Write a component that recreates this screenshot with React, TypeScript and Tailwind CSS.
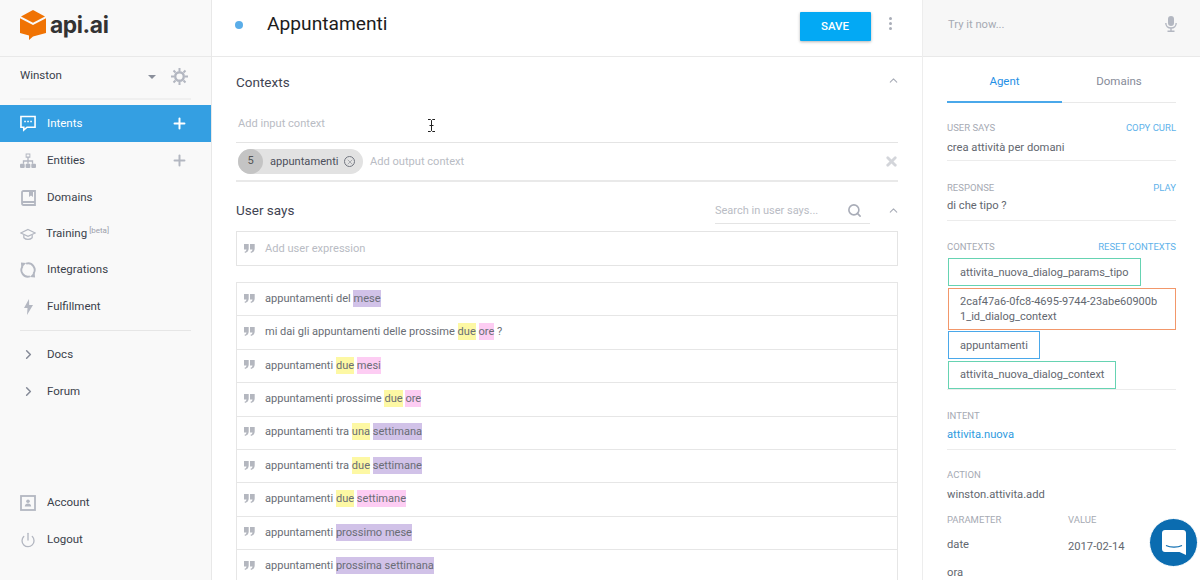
import React from 'react';
import { ChevronRight, ChevronUp, Search, Plus, Power, X } from 'lucide-react';

const Quote = () => (
  <svg width="11" height="9" viewBox="0 0 11 9" fill="#b4b7bf" className="shrink-0 mb-[2px]">
    <path d="M0 0h4.700v4.600C4.700 7 3.400 8.400 1 9L.5 7.700C1.700 7.300 2.400 6.500 2.500 5.400H0z" />
    <path d="M6 0h4.700v4.600C10.700 7 9.400 8.400 7 9l-.5-1.300C7.700 7.300 8.400 6.500 8.500 5.400H6z" />
  </svg>
);

const Logo = () => (
  <svg width="26" height="30" viewBox="0 0 26 30" fill="#f07304">
    <path d="M13 0 25 6.500 13 12.800 1 6.500z" />
    <path d="M0 8.200 13 15 26 8.200V23l-13 3.500L9 30v-4.500L0 23z" />
  </svg>
);

const Gear = () => (
  <svg width="17" height="17" viewBox="0 0 17 17" fill="none" stroke="#b3b7c1">
    <circle cx="8.500" cy="8.500" r="4.300" strokeWidth="2.400" />
    <path d="M8.500 0v3M8.500 14v3M0 8.500h3M14 8.500h3M2.500 2.500l2 2M12.500 12.500l2 2M2.500 14.500l2-2M12.500 4.500l2-2" strokeWidth="2" />
  </svg>
);

const IntentIcon = () => (
  <svg width="17" height="17" viewBox="0 0 17 17" fill="none">
    <path d="M1 1h15v11.500H7.500L4 15.500v-3H1z" stroke="#fff" strokeWidth="1.700" />
    <path d="M4.500 5.500h1.700v1.700H4.500zM7.700 5.500h1.700v1.700H7.700zM10.900 5.500h1.700v1.700h-1.700z" fill="#fff" />
  </svg>
);

const EntityIcon = () => (
  <svg width="17" height="16" viewBox="0 0 17 16" fill="#b3b7c1">
    <path d="M6 0h5v4.500H6zm1 1.200v2.100h3V1.200zM7.800 4.500h1.400v2.800H14V11h-1.400V8.700H9.200V11H7.800V8.700H4.400V11H3V7.300h4.800z" />
    <rect x="0" y="11" width="5" height="4.500" rx="1" />
    <rect x="6" y="11" width="5" height="4.500" rx="1" />
    <rect x="12" y="11" width="5" height="4.500" rx="1" />
  </svg>
);

const BookIcon = () => (
  <svg width="15" height="16" viewBox="0 0 15 16" fill="none">
    <path d="M1 13V2.500C1 1.600 1.600 1 2.500 1H14v14H2.500C1.600 15 1 14.300 1 13.400 1 12.500 1.600 12 2.500 12H14" stroke="#b3b7c1" strokeWidth="1.800" />
    <path d="M8 1h4v6L10 5.500 8 7z" fill="#b3b7c1" />
  </svg>
);

const CapIcon = () => (
  <svg width="21" height="15" viewBox="0 0 21 15" fill="none" stroke="#b3b7c1" strokeWidth="1.600">
    <path d="M10.500 1 20 5.500l-9.500 4.500L1 5.500z" />
    <path d="M5 8v3.800c1.500 1.500 3.500 2.200 5.500 2.200s4-.7 5.500-2.200V8" />
  </svg>
);

const SyncIcon = () => (
  <svg width="17" height="18" viewBox="0 0 17 18" fill="none" stroke="#b3b7c1" strokeWidth="2">
    <path d="M10.500 15.800A7 7 0 0 1 2.800 5" />
    <path d="M6.500 2.200A7 7 0 0 1 14.200 13" />
    <path d="M1 1l5.500.5L1.500 7z" fill="#b3b7c1" stroke="none" />
    <path d="M16 17l-5.500-.5 5-5.500z" fill="#b3b7c1" stroke="none" />
  </svg>
);

const BoltIcon = () => (
  <svg width="9" height="16" viewBox="0 0 9 16" fill="#b3b7c1">
    <path d="M5 0 0 9h3.500L3 16l6-10H5.200z" />
  </svg>
);

const AccountIcon = () => (
  <svg width="16" height="16" viewBox="0 0 16 16" fill="none">
    <rect x="1" y="1" width="14" height="14" stroke="#b3b7c1" strokeWidth="1.800" />
    <circle cx="8" cy="6.300" r="1.800" fill="#b3b7c1" />
    <path d="M4.800 11.500c0-2 1.400-3 3.200-3s3.200 1 3.200 3z" fill="#b3b7c1" />
  </svg>
);

const MicIcon = () => (
  <svg width="12" height="16" viewBox="0 0 12 16" fill="none" className="mb-[2px]">
    <rect x="3" y="0" width="6" height="10" rx="3" fill="#b3b7c1" />
    <path d="M.8 7c0 3 2.200 5 5.200 5s5.200-2 5.200-5M6 12v2.500M2.500 15.200h7" stroke="#b3b7c1" strokeWidth="1.400" />
  </svg>
);

const ChatBubble = () => (
  <svg width="24" height="25" viewBox="0 0 24 25">
    <path d="M3 0h18c1.700 0 3 1.300 3 3v22l-6.500-3H3c-1.700 0-3-1.300-3-3V3c0-1.700 1.300-3 3-3z" fill="#fff" />
    <path d="M4 15.500c4.500 2.200 11.500 2.200 16 0" stroke="#0b6cb0" strokeWidth="1.300" fill="none" />
  </svg>
);

const Cursor = () => (
  <svg width="7" height="13" viewBox="0 0 7 13" fill="none" stroke="#222" strokeWidth="1">
    <path d="M0 .5h2.500L3.500 1.500 4.500.5H7M3.500 1.500v10M0 12.500h2.500l1-1 1 1H7M1.500 6.500h4" />
  </svg>
);

function NavItem({ icon, label, active, add, sup, h = 'h-[37px]' }: { icon: React.ReactNode; label: string; active?: boolean; add?: boolean; sup?: boolean; h?: string }) {
  return (
    <div className={`flex items-center ${h} pl-5 pr-[23px] ${active ? 'bg-[#349fe2] text-white' : 'text-[#3a3f4b]'}`}>
      <span className="w-[16px] mr-[11px] flex items-center justify-center shrink-0">{icon}</span>
      <span className={`text-[11.500px] ${sup ? '-ml-[1px]' : ''}`}>
        {label}
        {sup && <sup className="text-[8px] text-[#9ba0ab] ml-[2px]">[beta]</sup>}
      </span>
      {add && <Plus size={17} strokeWidth={2.800} className={`ml-auto ${active ? 'text-white' : 'text-[#b3b7c1]'}`} />}
    </div>
  );
}

function Sidebar() {
  return (
    <div className="w-[212px] shrink-0 h-full bg-[#f9f9f9] border-r border-[#e8e8e8] flex flex-col">
      <div className="h-[57px] shrink-0 border-b border-[#e9e9e9] pl-5 flex items-center gap-[4px] pb-[6px]">
        <Logo />
        <span className="text-[22.800px] font-bold text-[#333] tracking-[-0.4px] font-['Inter',sans-serif]">api.ai</span>
      </div>
      <div className="h-[43px] mx-5 shrink-0 border-b-2 border-[#f0f0f0] flex items-center text-[11.500px] text-[#3a3f4b] pb-[2px]">
        <span className="pb-[1px]">Winston</span>
        <span className="ml-auto mr-[15px] w-0 h-0 border-x-4 border-x-transparent border-t-[4px] border-t-[#8a8f9b]" />
        <span className="mr-[3px]"><Gear /></span>
      </div>
      <div className="h-[5px] shrink-0" />
      <NavItem active add label="Intents" icon={<IntentIcon />} />
      <NavItem add label="Entities" icon={<EntityIcon />} />
      <NavItem label="Domains" icon={<BookIcon />} />
      <NavItem sup label="Training" h="h-[36px]" icon={<CapIcon />} />
      <NavItem label="Integrations" h="h-[36px]" icon={<SyncIcon />} />
      <NavItem label="Fulfillment" icon={<BoltIcon />} />
      <div className="mx-5 mt-[5px] mb-[5px] border-t border-[#e6e6e6]" />
      <NavItem label="Docs" icon={<ChevronRight size={15} strokeWidth={2.400} className="text-[#858a97]" />} />
      <NavItem label="Forum" icon={<ChevronRight size={15} strokeWidth={2.400} className="text-[#858a97]" />} />
      <div className="mt-auto pb-[22px]">
        <NavItem label="Account" icon={<AccountIcon />} />
        <NavItem label="Logout" icon={<Power size={18} strokeWidth={2} className="text-[#b3b7c1]" />} />
      </div>
    </div>
  );
}

const YEL = 'bg-[#fdf8a4]';
const PNK = 'bg-[#fdcdf3]';
const PUR = 'bg-[#d1c2e8]';

const rows: [string, string][][] = [
  [['appuntamenti del ', ''], ['mese', PUR]],
  [['mi dai gli appuntamenti delle prossime ', ''], ['due', YEL], [' ', ''], ['ore', PNK], [' ?', '']],
  [['appuntamenti ', ''], ['due', YEL], [' ', ''], ['mesi', PNK]],
  [['appuntamenti prossime ', ''], ['due', YEL], [' ', ''], ['ore', PNK]],
  [['appuntamenti tra ', ''], ['una', YEL], [' ', ''], ['settimana', PUR]],
  [['appuntamenti tra ', ''], ['due', YEL], [' ', ''], ['settimane', PUR]],
  [['appuntamenti ', ''], ['due', YEL], [' ', ''], ['settimane', PNK]],
  [['appuntamenti ', ''], ['prossimo mese', PUR]],
  [['appuntamenti ', ''], ['prossima settimana', PUR]],
];

function Main() {
  return (
    <div className="flex-1 min-w-0 h-full flex flex-col bg-white border-r border-[#ededed] overflow-hidden">
      <div className="h-[57px] shrink-0 border-b border-[#e9e9e9] flex items-center pl-[23px] pr-[30px]">
        <span className="w-2 h-2 rounded-full bg-[#5aade8] mb-[6px]" />
        <span className="ml-[24px] text-[19.200px] text-[#1c1c1c] mb-[8px]">Appuntamenti</span>
        <button className="ml-auto w-[71px] h-[29px] bg-[#03a9f4] text-white text-[11.500px] font-medium rounded-[1px] shadow-[0_1px_3px_rgba(0,0,0,0.3)] mb-[3px]">SAVE</button>
        <span className="ml-[18px] mb-[9px] flex flex-col gap-[1.500px]">
          <span className="w-[3.500px] h-[3.500px] rounded-full bg-[#a9adb8]" />
          <span className="w-[3.500px] h-[3.500px] rounded-full bg-[#a9adb8]" />
          <span className="w-[3.500px] h-[3.500px] rounded-full bg-[#a9adb8]" />
        </span>
      </div>

      <div className="px-6 flex flex-col">
        <div className="h-[50px] flex items-center justify-between">
          <span className="text-[13.500px] text-[#3f4452]">Contexts</span>
          <ChevronUp size={13} className="text-[#a9adb8] mr-[-2px] mb-[3px]" />
        </div>
        <div className="h-[36px] border-b border-[#e4e4e4] flex items-center pl-[2px] pb-[1px] text-[11.100px] text-[#b9bcc4]">Add input context</div>
        <div className="h-[39px] border-b-2 border-[#e9e9e9] flex items-center pl-[2px]">
          <span className="flex items-center h-[25px] w-[125px] rounded-full bg-[#e2e2e2] text-[11.100px] text-[#4c505c]">
            <span className="w-[25px] h-[25px] rounded-full bg-[#c4c4c4] flex items-center justify-center text-[#555]">5</span>
            <span className="ml-[7px] pt-[1px]">appuntamenti</span>
            <span className="ml-[6px] w-[11px] h-[11px] rounded-full border border-[#71757f] flex items-center justify-center">
              <X size={8} strokeWidth={1.500} className="text-[#71757f]" />
            </span>
          </span>
          <span className="ml-[7px] pt-[1px] text-[11.100px] text-[#b9bcc4]">Add output context</span>
          <X size={15} strokeWidth={4.500} className="ml-auto text-[#d3d5da] -mr-[1px]" />
        </div>
        <div className="h-[49px] flex items-center pt-[7px]">
          <span className="text-[13.500px] text-[#3f4452] pt-[1px]">User says</span>
          <div className="ml-auto w-[155px] h-[25px] border-b border-[#e4e4e4] flex items-center text-[11px] text-[#b9bcc4] mt-[2px] mr-[17px] pt-[1px]">
            <span>Search in user says...</span>
            <Search size={15} strokeWidth={2.600} className="ml-auto mr-[8px] text-[#a9adb8] mb-[2px]" />
          </div>
          <ChevronUp size={13} className="text-[#a9adb8] mr-[-2px]" />
        </div>
        <div className="h-[35px] border border-[#e4e4e4] flex items-center pl-[7px] pt-[1px] gap-[10px] text-[11.100px] text-[#b9bcc4]">
          <Quote />
          <span>Add user expression</span>
        </div>
        <div className="mt-[16px] border border-[#e6e6e6] border-b-0">
          {rows.map((row, i) => (
            <div key={i} className="h-[33.400px] border-b border-[#e6e6e6] flex items-center pl-[7px] gap-[10px] text-[11.050px] text-[#696d75]">
              <Quote />
              <span className="whitespace-pre">
                {row.map(([t, c], j) => (
                  <span key={j} className={c ? `${c} py-[2px]` : ''}>{t}</span>
                ))}
              </span>
            </div>
          ))}
        </div>
      </div>
    </div>
  );
}

const Label = ({ children }: { children: React.ReactNode }) => (
  <span className="text-[9.500px] text-[#a6aab3]">{children}</span>
);
const Link = ({ children }: { children: React.ReactNode }) => (
  <span className="text-[9.500px] text-[#5eb2ea]">{children}</span>
);

function CtxBox({ color, wide, children }: { color: string; wide?: boolean; children: React.ReactNode }) {
  return (
    <div className={`border ${color} ${wide ? 'w-[228px] py-[5px]' : 'w-fit py-[5.500px]'} px-[11px] text-[11px] leading-[15px] text-[#63676f] ml-[1px] whitespace-nowrap`}>{children}</div>
  );
}

function Section({ left, right, value, blue, top }: { left: string; right?: string; value: string; blue?: boolean; top: string }) {
  return (
    <div className={`h-[60px] border-b border-[#ececec] ${top}`}>
      <div className="flex justify-between items-center h-[14px]">
        <Label>{left}</Label>
        {right && <Link>{right}</Link>}
      </div>
      <div className={`mt-[3px] text-[11.200px] ${blue ? 'text-[#2f9be0]' : 'text-[#63676f]'}`}>{value}</div>
    </div>
  );
}

function RightPanel() {
  return (
    <div className="w-[277px] shrink-0 h-full flex flex-col bg-white overflow-hidden">
      <div className="h-[57px] shrink-0 bg-[#f7f7f7] border-b border-[#e9e9e9] flex items-center pl-[25px] pr-[23px] pb-[6px]">
        <span className="text-[11.200px] text-[#a6aab3]">Try it now...</span>
        <span className="ml-auto"><MicIcon /></span>
      </div>
      <div className="pl-[24px] pr-[24px] flex flex-col">
        <div className="h-[46px] flex border-b border-[#e9e9e9] text-[11.500px]">
          <div className="w-[115px] -mb-[1px] border-b-2 border-[#4aa8ea] text-[#1f90e6] flex items-center justify-center pt-[5px]">Agent</div>
          <div className="flex-1 text-[#868b98] flex items-center justify-center pt-[4px]">Domains</div>
        </div>
        <div className="h-[58px] border-b border-[#ececec] pt-[18px]">
          <div className="flex justify-between items-center h-[14px]">
            <Label>USER SAYS</Label>
            <Link>COPY CURL</Link>
          </div>
          <div className="mt-[5px] text-[11.200px] text-[#63676f]">crea attività per domani</div>
        </div>
        <Section left="RESPONSE" right="PLAY" value="di che tipo ?" top="pt-[20px]" />
        <div className="pt-[19px] border-b border-[#ececec] pb-[0.500px]">
          <div className="flex justify-between items-center h-[14px]">
            <Label>CONTEXTS</Label>
            <Link>RESET CONTEXTS</Link>
          </div>
          <div className="flex flex-col gap-[1.500px] mt-[4px]">
            <CtxBox color="border-[#66d3b2]">attivita_nuova_dialog_params_tipo</CtxBox>
            <CtxBox wide color="border-[#f2976a]">2caf47a6-0fc8-4695-9744-23abe60900b<br />1_id_dialog_context</CtxBox>
            <CtxBox color="border-[#4aa8ea]">appuntamenti</CtxBox>
            <CtxBox color="border-[#66d3b2]">attivita_nuova_dialog_context</CtxBox>
          </div>
        </div>
        <Section left="INTENT" value="attivita.nuova" blue top="pt-[19.500px]" />
        <div className="pt-[18.500px]">
          <div className="h-[14px] flex items-center"><Label>ACTION</Label></div>
          <div className="mt-[4px] text-[11.200px] text-[#63676f]">winston.attivita.add</div>
          <div className="grid grid-cols-[121px_1fr] mt-[10px] text-[11.200px] text-[#63676f]">
            <Label>PARAMETER</Label>
            <Label>VALUE</Label>
            <div className="mt-[9px]">date</div>
            <div className="mt-[11px]">2017-02-14</div>
            <div className="mt-[10px]">ora</div>
          </div>
        </div>
      </div>
    </div>
  );
}

export default function App() {
  return (
    <div className="relative w-[1200px] h-[580px] overflow-hidden flex bg-white font-['Roboto',sans-serif]">
      <Sidebar />
      <Main />
      <RightPanel />
      <div className="absolute left-[428px] top-[119px]"><Cursor /></div>
      <div className="absolute left-[1149px] top-[518px] w-[49px] h-[49px] rounded-full bg-[#0b6cb0] border border-white flex items-center justify-center">
        <ChatBubble />
      </div>
    </div>
  );
}
